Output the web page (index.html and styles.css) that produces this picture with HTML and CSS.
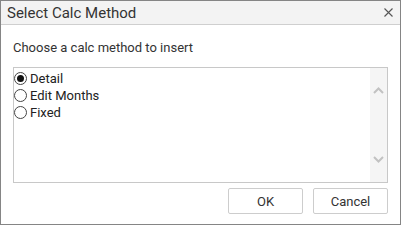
FILE: index.html
```html
<!DOCTYPE html>
<html lang="en">
<head>
  <meta charset="UTF-8">
  <title>Select Calc Method</title>
  <link rel="stylesheet" href="styles.css">
</head>
<body>
  <div class="dialog">
    <div class="title-bar">
      <span class="title">Select Calc Method</span>
      <button class="close-btn" aria-label="Close">
        <svg width="9" height="9" viewBox="0 0 9 9"><path d="M0.5 0.5L8.5 8.5M8.5 0.5L0.5 8.5" stroke="#555" stroke-width="1.1" fill="none"/></svg>
      </button>
    </div>
    <div class="content">
      <div class="prompt">Choose a calc method to insert</div>
      <div class="list-box">
        <div class="options">
          <label class="option"><span class="radio checked"></span>Detail</label>
          <label class="option"><span class="radio"></span>Edit Months</label>
          <label class="option"><span class="radio"></span>Fixed</label>
        </div>
        <div class="scrollbar">
          <svg width="11" height="7" viewBox="0 0 11 7"><path d="M1 6L5.5 1.5L10 6" stroke="#c2c2c2" stroke-width="2" fill="none"/></svg>
          <svg width="11" height="7" viewBox="0 0 11 7"><path d="M1 1L5.5 5.5L10 1" stroke="#c2c2c2" stroke-width="2" fill="none"/></svg>
        </div>
      </div>
    </div>
    <div class="footer">
      <button class="btn">OK</button>
      <button class="btn">Cancel</button>
    </div>
  </div>
</body>
</html>
```
FILE: styles.css
```css
body {
  margin: 0;
  font-family: Roboto, "Liberation Sans", sans-serif;
  color: #222;
}
.dialog {
  width: 401px;
  height: 225px;
  box-sizing: border-box;
  border: 1px solid #858585;
  background: #fff;
  display: flex;
  flex-direction: column;
}
.title-bar {
  height: 24px;
  box-sizing: border-box;
  background: #f3f3f3;
  border-bottom: 1px solid #cfcfcf;
  display: flex;
  align-items: center;
  justify-content: space-between;
  padding: 0 7px 0 6px;
}
.title {
  font-size: 15px;
  color: #333;
}
.close-btn {
  background: none;
  border: none;
  padding: 0;
  width: 9px;
  height: 9px;
  display: flex;
}
.content {
  padding: 15px 12px 0 12px;
}
.prompt {
  font-size: 13px;
  line-height: 16px;
  color: #333;
}
.list-box {
  margin-top: 11px;
  height: 116px;
  box-sizing: border-box;
  border: 1px solid #c8c8c8;
  display: flex;
}
.options {
  flex: 1;
  padding-top: 2px;
}
.option {
  display: flex;
  align-items: center;
  height: 17px;
  font-size: 13px;
  color: #222;
}
.radio {
  width: 11px;
  height: 11px;
  border: 1px solid #444;
  border-radius: 50%;
  margin-right: 3px;
  display: flex;
  align-items: center;
  justify-content: center;
}
.radio.checked::after {
  content: "";
  width: 7px;
  height: 7px;
  border-radius: 50%;
  background: #111;
}
.scrollbar {
  width: 17px;
  background: #f5f5f5;
  display: flex;
  flex-direction: column;
  align-items: center;
  justify-content: space-between;
  padding: 19px 0 19px;
}
.footer {
  display: flex;
  justify-content: flex-end;
  gap: 10px;
  padding: 5px 12px 0 0;
}
.btn {
  width: 75px;
  height: 26px;
  background: #fff;
  border: 1px solid #cdcdcd;
  border-radius: 2px;
  font-family: Roboto, "Liberation Sans", sans-serif;
  font-size: 13px;
  color: #333;
  padding: 0;
}
```
